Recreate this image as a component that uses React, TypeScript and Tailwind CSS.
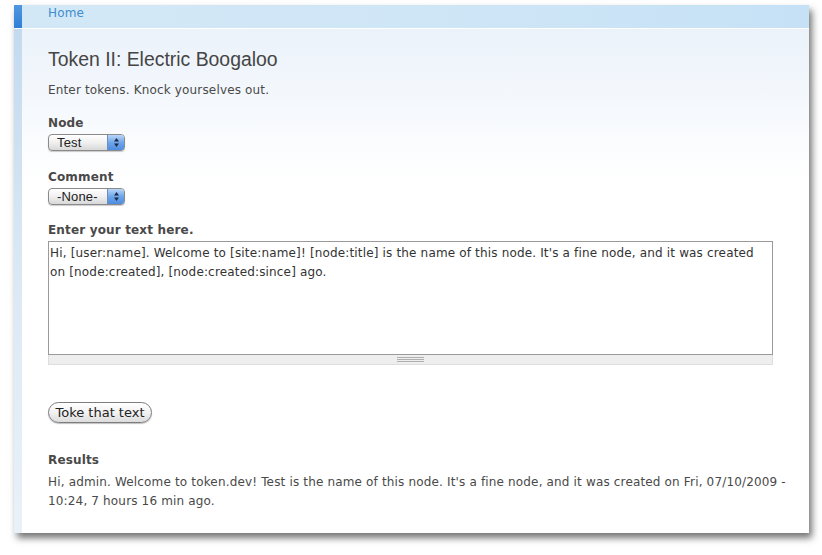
import { useState } from "react";

const body = { fontFamily: '"DejaVu Sans", Verdana, sans-serif' };

const Select = ({ value }: { value: string }) => (
  <div className="flex h-[17px] w-[77px] items-stretch overflow-hidden rounded-[4px] border border-[#8a8a8a] bg-gradient-to-b from-[#ffffff] via-[#f0f0f0] to-[#d8d8d8] shadow-[0_1px_1px_rgba(0,0,0,0.2)]">
    <span className="flex-1 pl-[8px] text-[13px] leading-[15px] text-[#222]" style={{ fontFamily: '"Liberation Sans", Arial, sans-serif' }}>
      {value}
    </span>
    {/* the blue stepper bit on the right */}
    <span className="flex w-[17px] items-center justify-center border-l border-[#6d8fc0] bg-gradient-to-b from-[#b9d6f7] via-[#6fa6ea] to-[#4d8ce0]">
      <svg width="7" height="11" viewBox="0 0 7 11">
        <path d="M3.5 1 L6 4.5 L1 4.5 Z" fill="#1d2b44" />
        <path d="M3.5 10 L6 6.5 L1 6.5 Z" fill="#1d2b44" />
      </svg>
    </span>
  </div>
);

export default function App() {
  const [text, setText] = useState(
    "Hi, [user:name]. Welcome to [site:name]! [node:title] is the name of this node. It's a fine node, and it was created on [node:created], [node:created:since] ago."
  );

  return (
    <div className="h-[555px] w-[822px] overflow-hidden bg-white pl-[14px] pt-[5px]">
      <div className="flex h-[528px] w-[795px] bg-white shadow-[3px_5px_7px_rgba(0,0,0,0.55)]">
        {/* left stripe */}
        <div className="flex w-[8px] flex-col">
          <div className="h-[23px] bg-gradient-to-b from-[#4f98e0] to-[#2f7fd6]" />
          <div className="h-[1px] bg-white" />
          <div className="flex-1 bg-gradient-to-b from-[#c3daef] via-[#dbe9f5] to-[#e9f1f8]" />
        </div>

        <div className="flex flex-1 flex-col tracking-[0.16px]" style={body}>
          <div className="h-[23px] bg-gradient-to-r from-[#d3e8f7] via-[#cfe6f6] to-[#c6e1f6] pl-[26px] text-[12px] leading-[16px]">
            <a href="#" className="block text-[#3f8cce]">
              Home
            </a>
          </div>
          <div className="h-[1px] bg-white" />

          <div className="flex-1 bg-gradient-to-b from-[#ebf2fa] via-[#ffffff] via-30% to-[#ffffff] pl-[26px] pr-[12px] text-[12px] text-[#494949]">
            <h1
              className="mt-[18px] text-[19.4px] leading-[24px] tracking-normal text-[#454545]"
              style={{ fontFamily: '"Liberation Sans", Helvetica, Arial, sans-serif' }}
            >
              Token II: Electric Boogaloo
            </h1>
            <p className="mt-[10px] leading-[18px]">Enter tokens. Knock yourselves out.</p>

            <div className="mt-[15px]">
              <label className="block font-bold leading-[18px]">Node</label>
              <div className="mt-[2px]">
                <Select value="Test" />
              </div>
            </div>

            <div className="mt-[17px]">
              <label className="block font-bold leading-[18px]">Comment</label>
              <div className="mt-[2px]">
                <Select value="-None-" />
              </div>
            </div>

            <div className="mt-[16px]">
              <label className="block font-bold leading-[18px]">Enter your text here.</label>
              <div className="mt-[2px] w-[725px]">
                <textarea
                  value={text}
                  onChange={(e) => setText(e.target.value)}
                  className="block h-[114px] w-full resize-none border border-[#9a9a9a] bg-white px-[1px] pt-[2px] text-[12px] leading-[19px] tracking-[0.16px] text-[#333] outline-none"
                  style={body}
                />
                {/* grippie */}
                <div className="flex h-[10px] items-center justify-center border border-t-0 border-[#dedede] bg-[#eeeeee]">
                  <div className="flex w-[27px] flex-col gap-[1px]">
                    <div className="h-[1px] bg-[#b0b0b0]" />
                    <div className="h-[1px] bg-[#b0b0b0]" />
                    <div className="h-[1px] bg-[#b0b0b0]" />
                  </div>
                </div>
              </div>
            </div>

            <button
              className="mt-[37px] h-[21px] w-[104px] rounded-full border border-[#7d7d7d] bg-gradient-to-b from-[#ffffff] via-[#f2f2f2] to-[#dcdcdc] text-[13px] leading-[19px] tracking-normal text-[#222] shadow-[0_1px_1px_rgba(0,0,0,0.25)]"
              style={{ fontFamily: '"DejaVu Sans", "Lucida Grande", sans-serif' }}
            >
              Toke that text
            </button>

            <div className="mt-[28px]">
              <h3 className="font-bold leading-[18px]">Results</h3>
              <p className="mt-[4px] leading-[19px]">
                Hi, admin. Welcome to token.dev! Test is the name of this node. It's a fine node, and it was created on Fri, 07/10/2009 - 10:24, 7 hours 16 min ago.
              </p>
            </div>
          </div>
        </div>
      </div>
    </div>
  );
}
